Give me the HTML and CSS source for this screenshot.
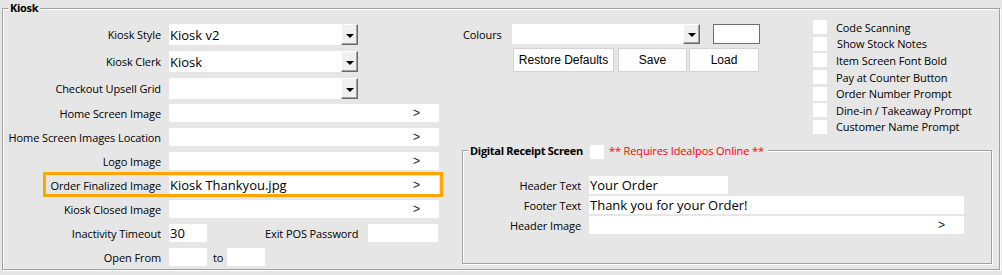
FILE: index.html
```html
<!DOCTYPE html>
<html>
<head>
<meta charset="utf-8">
<title>Kiosk</title>
<link rel="stylesheet" href="styles.css">
</head>
<body>
<div class="group kiosk">
  <span class="caption">Kiosk</span>

  <div class="left">
    <div class="row tall"><span class="lbl">Kiosk Style</span><div class="combo"><span class="field val">Kiosk v2</span><span class="drop"></span></div></div>
    <div class="row tall"><span class="lbl">Kiosk Clerk</span><div class="combo"><span class="field val">Kiosk</span><span class="drop"></span></div></div>
    <div class="row tall last"><span class="lbl">Checkout Upsell Grid</span><div class="combo"><span class="field val"></span><span class="drop"></span></div></div>
    <div class="row"><span class="lbl">Home Screen Image</span><div class="field path"><span class="val"></span><span class="more">&gt;</span></div></div>
    <div class="row"><span class="lbl">Home Screen Images Location</span><div class="field path"><span class="val"></span><span class="more">&gt;</span></div></div>
    <div class="row"><span class="lbl">Logo Image</span><div class="field path"><span class="val"></span><span class="more">&gt;</span></div></div>
    <div class="row highlight"><span class="lbl">Order Finalized Image</span><div class="field path"><span class="val">Kiosk Thankyou.jpg</span><span class="more">&gt;</span></div></div>
    <div class="row"><span class="lbl">Kiosk Closed Image</span><div class="field path"><span class="val"></span><span class="more">&gt;</span></div></div>
    <div class="row"><span class="lbl">Inactivity Timeout</span><div class="field small"><span class="val">30</span></div><span class="exit-lbl">Exit POS Password</span><div class="field pwd"></div></div>
    <div class="row"><span class="lbl">Open From</span><div class="field small"></div><span class="to">to</span><div class="field small"></div></div>
  </div>

  <div class="right">
    <div class="top">
      <div class="colours">
        <div class="crow">
          <span class="clbl">Colours</span>
          <div class="combo ccombo"><span class="field val"></span><span class="drop"></span></div>
          <span class="swatch"></span>
        </div>
        <div class="btns">
          <button class="btn b1">Restore Defaults</button>
          <button class="btn b2">Save</button>
          <button class="btn b3">Load</button>
        </div>
      </div>
      <ul class="checks">
        <li><span class="cb"></span>Code Scanning</li>
        <li><span class="cb"></span><span class="nudge">Show Stock Notes</span></li>
        <li><span class="cb"></span>Item Screen Font Bold</li>
        <li><span class="cb"></span>Pay at Counter Button</li>
        <li><span class="cb"></span>Order Number Prompt</li>
        <li><span class="cb"></span>Dine-in / Takeaway Prompt</li>
        <li><span class="cb"></span>Customer Name Prompt</li>
      </ul>
    </div>

    <div class="group receipt">
      <div class="caption rcap"><span class="rtitle">Digital Receipt Screen</span><span class="cb rcb"></span><span class="red">** Requires Idealpos Online **</span></div>
      <div class="rrow"><span class="rlbl">Header Text</span><div class="field hdr"><span class="val">Your Order</span></div></div>
      <div class="rrow"><span class="rlbl">Footer Text</span><div class="field wide"><span class="val">Thank you for your Order!</span></div></div>
      <div class="rrow"><span class="rlbl">Header Image</span><div class="field wide"><span class="val"></span><span class="more">&gt;</span></div></div>
    </div>
  </div>
</div>
</body>
</html>
```

FILE: styles.css
```css
html, body {
  margin: 0;
  padding: 0;
}
body {
  width: 1002px;
  height: 275px;
  overflow: hidden;
  background: #e6e6e6;
  font-family: "Open Sans", "Noto Sans", sans-serif;
  font-size: 11px;
  letter-spacing: -0.1px;
  color: #000;
}

.group {
  position: relative;
  box-sizing: border-box;
  border: 1px solid #a0a0a0;
  box-shadow: inset 1px 1px 0 #fff, 1px 1px 0 #fff;
}
.kiosk {
  margin: 8px 2px 0 2px;
  height: 262px;
  display: flex;
}
.caption {
  position: absolute;
  top: -9px;
  left: 5px;
  padding: 0 2px;
  background: #e6e6e6;
  font-weight: bold;
  letter-spacing: -0.3px;
  line-height: 16px;
  white-space: nowrap;
}

/* left column */
.left {
  width: 440px;
  flex: none;
  padding-top: 15px;
}
.row {
  position: relative;
  display: flex;
  align-items: center;
  height: 18px;
  margin-bottom: 6px;
}
.row.tall {
  height: 21px;
}
.row.last {
  margin-bottom: 5px;
}
.lbl {
  flex: none;
  width: 158px;
  margin-right: 8px;
  text-align: right;
  white-space: nowrap;
}

.field {
  box-sizing: border-box;
  height: 100%;
  background: #fff;
  display: flex;
  align-items: center;
  padding-left: 1px;
  font-size: 13px;
  letter-spacing: 0;
  white-space: nowrap;
}
.field .val {
  flex: 1;
}
.more {
  font-family: "Liberation Sans", Arial, sans-serif;
  font-size: 12px;
  color: #222;
  padding-right: 19px;
}

.combo {
  display: flex;
  height: 100%;
  width: 189px;
}
.combo .field {
  flex: 1;
}
.drop {
  position: relative;
  flex: none;
  box-sizing: border-box;
  width: 17px;
  height: 100%;
  background: #f0f0f0;
  border: 1px solid;
  border-color: #fff #696969 #696969 #fff;
  box-shadow: inset -1px -1px 0 #a0a0a0;
}
.drop::after {
  content: "";
  position: absolute;
  left: 4px;
  top: 50%;
  margin-top: -1px;
  border-left: 4px solid transparent;
  border-right: 4px solid transparent;
  border-top: 4px solid #000;
}

.path { width: 270px; }
.small { width: 38px; }
.pwd { width: 70px; }
.exit-lbl {
  margin-left: 58px;
  margin-right: 10px;
  white-space: nowrap;
}
.to {
  margin: 0 4px 0 6px;
}

.highlight::after {
  content: "";
  position: absolute;
  left: 40px;
  top: -4px;
  width: 400px;
  height: 25px;
  box-sizing: border-box;
  border: 3px solid #ffa500;
  pointer-events: none;
}

/* right side */
.right {
  flex: 1;
  display: flex;
  flex-direction: column;
}
.top {
  display: flex;
  height: 126px;
}
.colours {
  margin-left: 20px;
  padding-top: 15px;
}
.crow {
  display: flex;
  align-items: center;
  height: 20px;
}
.clbl {
  width: 40px;
  margin-right: 9px;
}
.ccombo {
  width: 188px;
}
.swatch {
  box-sizing: border-box;
  width: 47px;
  height: 20px;
  margin-left: 13px;
  background: #fff;
  border: 1px solid #6d6d6d;
}
.btns {
  display: flex;
  margin-top: 4px;
  margin-left: 50px;
}
.btn {
  box-sizing: border-box;
  height: 24px;
  margin: 0;
  padding: 0;
  background: #fdfdfd;
  border: 1px solid #d4d4d4;
  font-family: "Liberation Sans", Arial, sans-serif;
  font-size: 12px;
  letter-spacing: 0;
  color: #000;
}
.b1 { width: 101px; }
.b2 { width: 69px; margin-left: 4px; }
.b3 { width: 70px; margin-left: 2px; }

.checks {
  list-style: none;
  margin: 0 0 0 53px;
  padding: 10px 0 0 0;
}
.checks li {
  display: flex;
  align-items: center;
  height: 16.6px;
  white-space: nowrap;
}
.cb {
  flex: none;
  width: 14px;
  height: 14px;
  background: #fff;
  margin-right: 9px;
}
.nudge {
  margin-left: 1px;
}

.receipt {
  margin: 15px 0 0 19px;
  width: 530px;
  height: 114px;
  padding-top: 25px;
}
.rcap {
  display: flex;
  align-items: center;
  padding: 0 4px 0 2px;
}
.rcb {
  margin: 3px 5px 0 7px;
}
.red {
  font-weight: normal;
  letter-spacing: -0.1px;
  color: #ff0000;
}
.rrow {
  display: flex;
  align-items: center;
  height: 18px;
  margin-bottom: 2px;
}
.rlbl {
  flex: none;
  width: 118px;
  margin-right: 8px;
  text-align: right;
  white-space: nowrap;
}
.hdr { width: 139px; }
.wide { width: 375px; }
```
